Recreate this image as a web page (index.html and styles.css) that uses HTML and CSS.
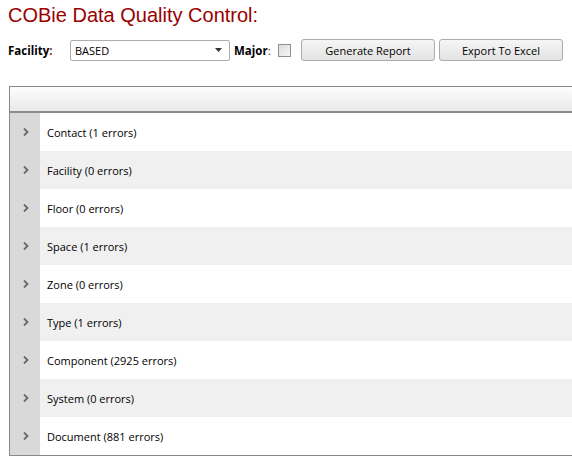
FILE: index.html
```html
<!DOCTYPE html>
<html>
<head>
<meta charset="utf-8">
<link rel="stylesheet" href="styles.css">
</head>
<body>
<div class="page">
  <h1 class="title">COBie Data Quality Control:</h1>
  <div class="toolbar">
    <span class="label facility">Facility<span class="colon-red">:</span></span>
    <div class="select">
      <span class="select-text">BASED</span>
      <svg class="select-arrow" width="7" height="4" viewBox="0 0 7 4"><path d="M0 0H7L3.5 4Z" fill="#333"/></svg>
    </div>
    <span class="label major">Major<span class="colon-plain">:</span></span>
    <span class="checkbox"></span>
    <button class="btn btn-gen">Generate Report</button>
    <button class="btn btn-exp">Export To Excel</button>
  </div>
  <div class="grid">
    <div class="grid-header"></div>
    <div class="row"><div class="expander"><svg width="6" height="8" viewBox="0 0 6 8"><path d="M1 0.5L4.5 4L1 7.5" fill="none" stroke="#666" stroke-width="1.8"/></svg></div><div class="cell">Contact (1 errors)</div></div>
    <div class="row alt"><div class="expander"><svg width="6" height="8" viewBox="0 0 6 8"><path d="M1 0.5L4.5 4L1 7.5" fill="none" stroke="#666" stroke-width="1.8"/></svg></div><div class="cell">Facility (0 errors)</div></div>
    <div class="row"><div class="expander"><svg width="6" height="8" viewBox="0 0 6 8"><path d="M1 0.5L4.5 4L1 7.5" fill="none" stroke="#666" stroke-width="1.8"/></svg></div><div class="cell">Floor (0 errors)</div></div>
    <div class="row alt"><div class="expander"><svg width="6" height="8" viewBox="0 0 6 8"><path d="M1 0.5L4.5 4L1 7.5" fill="none" stroke="#666" stroke-width="1.8"/></svg></div><div class="cell">Space (1 errors)</div></div>
    <div class="row"><div class="expander"><svg width="6" height="8" viewBox="0 0 6 8"><path d="M1 0.5L4.5 4L1 7.5" fill="none" stroke="#666" stroke-width="1.8"/></svg></div><div class="cell">Zone (0 errors)</div></div>
    <div class="row alt"><div class="expander"><svg width="6" height="8" viewBox="0 0 6 8"><path d="M1 0.5L4.5 4L1 7.5" fill="none" stroke="#666" stroke-width="1.8"/></svg></div><div class="cell">Type (1 errors)</div></div>
    <div class="row"><div class="expander"><svg width="6" height="8" viewBox="0 0 6 8"><path d="M1 0.5L4.5 4L1 7.5" fill="none" stroke="#666" stroke-width="1.8"/></svg></div><div class="cell">Component (2925 errors)</div></div>
    <div class="row alt"><div class="expander"><svg width="6" height="8" viewBox="0 0 6 8"><path d="M1 0.5L4.5 4L1 7.5" fill="none" stroke="#666" stroke-width="1.8"/></svg></div><div class="cell">System (0 errors)</div></div>
    <div class="row"><div class="expander"><svg width="6" height="8" viewBox="0 0 6 8"><path d="M1 0.5L4.5 4L1 7.5" fill="none" stroke="#666" stroke-width="1.8"/></svg></div><div class="cell">Document (881 errors)</div></div>
  </div>
</div>
</body>
</html>
```
FILE: styles.css
```css
* { box-sizing: border-box; }
html, body { margin: 0; padding: 0; background: #fff; overflow: hidden; }
body { font-family: "Open Sans", "Noto Sans", sans-serif; font-size: 11px; color: #000; }
.page { padding: 0 0 0 8px; }
.title {
  margin: 0; padding-top: 4px;
  font-family: "Liberation Sans", Arial, sans-serif;
  font-weight: normal; font-size: 20px; line-height: 23px;
  color: #990000;
}
.toolbar {
  display: flex; align-items: center;
  margin-top: 12px; height: 22px;
}
.label { font-weight: bold; font-size: 11.5px; }
.facility { width: 62px; }
.colon-red { color: #8b1a1a; }
.colon-plain { font-weight: normal; color: #333; }
.select {
  width: 160px; height: 21px;
  border: 1px solid #abadb3; border-radius: 2px;
  display: flex; align-items: center; justify-content: space-between;
  padding: 0 7px 0 4px; background: #fff;
}
.select-text { font-size: 11px; }
.major { margin-left: 4px; width: 40px; }
.checkbox {
  margin-left: 4px; width: 13px; height: 13px;
  border: 1px solid #8e8f8f;
  background: linear-gradient(135deg, #dcdcdc, #f6f6f6);
}
.btn {
  font-family: inherit; font-size: 11px; color: #000;
  height: 22px; padding: 0;
  border: 1px solid #acacac; border-radius: 3px;
  background: linear-gradient(#f6f6f6, #e3e3e3);
}
.btn-gen { margin-left: 10px; width: 134px; }
.btn-exp { margin-left: 4px; width: 124px; }
.grid {
  margin-top: 25px; margin-left: 1px;
  border-left: 1px solid #888; border-top: 1px solid #888; border-bottom: 1px solid #888;
}
.grid-header {
  height: 26px;
  background: linear-gradient(#fdfdfd, #e9e9e9);
  border-bottom: 2px solid #8a8a8a;
}
.row { display: flex; height: 38px; background: #fff; }
.row.alt { background: #f0f0f0; }
.expander {
  width: 30px; background: #d9d9d9;
  display: flex; align-items: center; justify-content: center;
  padding-left: 2px;
}
.cell { display: flex; align-items: center; padding-left: 7px; }
```
